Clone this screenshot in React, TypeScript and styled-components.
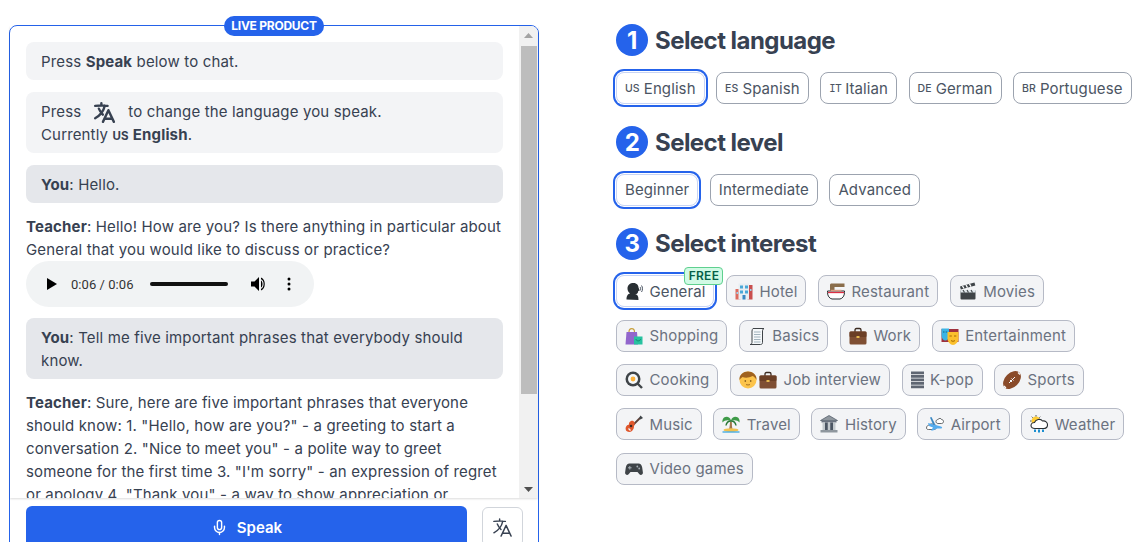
import React from "react";
import styled, { createGlobalStyle, css } from "styled-components";
import { HiOutlineLanguage } from "react-icons/hi2";
import { LuMic } from "react-icons/lu";

const Global = createGlobalStyle`
  html, body { margin: 0; padding: 0; height: 542px; overflow: hidden; background: #fff; }
  body { font-family: Inter, "Liberation Sans", sans-serif; color: #374151; }
`;

const Page = styled.div`
  display: flex;
  height: 542px;
  overflow: hidden;
  padding: 25px 0 0 9px;
  box-sizing: border-box;
`;

const ChatPanel = styled.section`
  position: relative;
  width: 530px;
  height: 560px;
  flex: none;
  box-sizing: border-box;
  border: 1px solid #2563eb;
  border-radius: 8px;
  display: flex;
  flex-direction: column;
`;

const LiveBadge = styled.span`
  position: absolute;
  top: -10px;
  left: 214px;
  width: 100px;
  height: 20px;
  border-radius: 10px;
  background: #2563eb;
  color: #fff;
  font-size: 12px;
  font-weight: 700;
  line-height: 19px;
  text-align: center;
  letter-spacing: -0.25px;
`;

const ChatMain = styled.div`
  display: flex;
  height: 472px;
  flex: none;
  box-shadow: 0 1px 2px rgba(0, 0, 0, 0.14);
`;

const Messages = styled.div`
  flex: 1;
  min-width: 0;
  overflow: hidden;
  padding: 16px 16px 0 16px;
  display: flex;
  flex-direction: column;
  gap: 12px;
  font-size: 15px;
  line-height: 23px;
  letter-spacing: 0.15px;
`;

const Bubble = styled.div<{ $dark?: boolean }>`
  flex: none;
  padding: 7.5px 15px;
  border-radius: 8px;
  background: ${(p) => (p.$dark ? "#e5e7eb" : "#f3f4f6")};
`;

const TeacherMsg = styled.div`
  flex: none;
`;

const InlineLangIcon = styled(HiOutlineLanguage)`
  display: inline-block;
  margin: -8px 11px -8px 11px;
  vertical-align: 0;
  path { stroke-width: 2.3; }
`;

const SmallFlag = styled.span`
  font-size: 11.5px;
  font-weight: 700;
  letter-spacing: 0;
  line-height: 1;
`;

const AudioBar = styled.div`
  width: 288px;
  height: 46px;
  margin-bottom: -1px;
  border-radius: 23px;
  background: #f1f3f4;
  display: flex;
  align-items: center;
  padding-left: 21px;
  box-sizing: border-box;
  color: #000;
  font-family: Roboto, Arial, sans-serif;
  font-size: 13px;
  letter-spacing: 0.05px;
`;

const AudioTime = styled.span`
  margin-left: 14px;
  width: 79px;
  flex: none;
  color: #333;
`;

const AudioTrack = styled.span`
  width: 78px;
  height: 4px;
  flex: none;
  border-radius: 2px;
  background: #111;
`;

const AudioSvg = styled.svg<{ $ml: number }>`
  margin-left: ${(p) => p.$ml}px;
  flex: none;
`;

const ScrollBar = styled.div`
  width: 19px;
  flex: none;
  background: #f1f1f1;
  display: flex;
  flex-direction: column;
  align-items: center;
  position: relative;
  border-top-right-radius: 7px;
`;

const ScrollArrow = styled.svg<{ $top?: boolean }>`
  position: absolute;
  left: 5px;
  ${(p) => (p.$top ? css`top: 7px;` : css`bottom: 6px;`)}
`;

const ScrollThumb = styled.div`
  width: 16px;
  height: 348px;
  margin-top: 20px;
  background: #bdbdbd;
`;

const ChatFooter = styled.div`
  flex: 1;
  display: flex;
  padding: 8px 15px 0 16px;
  gap: 15px;
`;

const SpeakButton = styled.div`
  width: 441px;
  height: 42px;
  flex: none;
  border-radius: 6px;
  background: #2563eb;
  color: #fff;
  font-size: 15px;
  font-weight: 600;
  display: flex;
  align-items: center;
  justify-content: center;
  gap: 9px;
`;

const LangButton = styled.div`
  width: 41px;
  height: 40px;
  margin-top: 1px;
  box-sizing: border-box;
  border: 1px solid #d1d5db;
  border-radius: 6px;
  display: flex;
  align-items: center;
  justify-content: center;
  color: #374151;
`;

const Sidebar = styled.div`
  margin-left: 77px;
  margin-top: -0.6px;
  width: 520px;
  flex: none;
  display: flex;
  flex-direction: column;
  gap: 22px;
`;

const Section = styled.div`
  display: flex;
  flex-direction: column;
  gap: 15.6px;
`;

const Heading = styled.h2`
  margin: 0;
  display: flex;
  align-items: center;
  gap: 7px;
  height: 32px;
  font-size: 24px;
  font-weight: 700;
  letter-spacing: -0.55px;
  color: #374151;
`;

const StepNumber = styled.span`
  width: 32px;
  height: 32px;
  border-radius: 50%;
  background: #2563eb;
  color: #fff;
  display: flex;
  align-items: center;
  justify-content: center;
  font-size: 24px;
  font-weight: 700;
`;

const ChipRow = styled.div`
  display: flex;
  flex-wrap: wrap;
  gap: 12.4px 11.5px;
`;

const Chip = styled.div<{ $selected?: boolean; $muted?: boolean }>`
  position: relative;
  height: 32px;
  box-sizing: border-box;
  padding: 0 8px;
  display: flex;
  align-items: center;
  gap: 6.5px;
  border: 1px solid ${(p) => (p.$muted ? "#b6bac6" : "#9ca3af")};
  border-radius: 8px;
  font-size: 15px;
  letter-spacing: ${(p) => (p.$muted ? "0.15px" : "0.1px")};
  white-space: nowrap;
  background: ${(p) => (p.$muted ? "#f3f4f6" : "#fff")};
  color: ${(p) => (p.$muted ? "#6b7280" : "#4b5563")};
  ${(p) =>
    p.$selected &&
    css`
      background: #fff;
      color: #4b5563;
      border-color: #c7d4f5;
      box-shadow: 0 0 0 1px #fff, 0 0 0 3px #2563eb;
    `}
`;

const Flag = styled.span<{ $serif?: boolean }>`
  font-size: 10.5px;
  font-weight: 500;
  letter-spacing: 0.1px;
  margin-right: -2.5px;
  ${(p) =>
    p.$serif &&
    css`
      font-family: "DejaVu Sans Mono", monospace;
      letter-spacing: -0.4px;
    `}
`;

const FreeBadge = styled.span`
  position: absolute;
  top: -9px;
  right: -10px;
  height: 18px;
  width: 39px;
  box-sizing: border-box;
  border: 1px solid #5fd08f;
  border-radius: 4px;
  background: #d1fae5;
  color: #065f46;
  font-size: 12px;
  font-weight: 600;
  line-height: 15px;
  text-align: center;
  letter-spacing: 0.3px;
`;

const EmojiGroup = styled.span`
  display: flex;
  gap: 2px;
`;

const EmojiBox = styled.svg<{ $narrow?: boolean }>`
  width: ${(p) => (p.$narrow ? 13 : 18)}px;
  height: 18px;
  flex: none;
`;

const emojis: Record<string, React.ReactNode> = {
  general: (
    <>
      <path d="M1.500 17.500c0-4 1.500-5.500 3.500-6C3 10 2.500 8 2.500 6.500 2.500 3 5 1 8.500 1c3.500 0 5 2.500 5 4.500l1.200 3-1.500.5c0 2-1 3-3 3.200 2.500.5 3.300 2 3.300 5.800z" fill="#292f33" />
      <path d="M15 5c.8.8.8 2.500.2 3.500M16.500 3.500c1.300 1.500 1.300 5 0 6.500" stroke="#4b5563" strokeWidth="1" fill="none" />
    </>
  ),
  hotel: (
    <>
      <rect x="0.500" y="7" width="5" height="10.500" fill="#dd6b5e" />
      <rect x="12.500" y="3" width="5" height="14.500" fill="#c94f4f" />
      <rect x="3.500" y="1.500" width="10.500" height="16" fill="#e8eef2" />
      <rect x="5" y="3.500" width="3" height="3" fill="#4aa8d8" />
      <rect x="10" y="3.500" width="3" height="3" fill="#4aa8d8" />
      <rect x="5" y="8.500" width="3" height="3" fill="#4aa8d8" />
      <rect x="10" y="8.500" width="3" height="3" fill="#4aa8d8" />
      <rect x="1.500" y="10" width="1.500" height="2" fill="#9ad4ee" />
      <rect x="15" y="7" width="1.500" height="2" fill="#9ad4ee" />
      <rect x="7.500" y="13" width="3" height="4.500" fill="#3b88c3" />
    </>
  ),
  restaurant: (
    <>
      <path d="M3 9V3c0-1 .7-1.500 1.500-1.500H17.500v3.500H7.500v4z" fill="#8a6d4b" />
      <path d="M.5 9h17v1.500c0 3.500-2 6-4.500 6.500H5c-2.500-.5-4.500-3-4.500-6.500z" fill="#fff" stroke="#292f33" strokeWidth="1" />
      <path d="M1 10.500h16" stroke="#dd2e44" strokeWidth="1.300" />
      <path d="M3.500 8.500h11" stroke="#d99e82" strokeWidth="1.400" />
    </>
  ),
  movies: (
    <>
      <rect x="1.500" y="8" width="15" height="9.500" rx="1" fill="#3f4448" />
      <path d="M1.500 8h15v2.500h-15z" fill="#e1e8ed" />
      <path d="M1 4.500 15.500 .5l.8 2.900L1.800 7.400z" fill="#3f4448" />
      <path d="M3.500 4 5 6.500M7 3l1.500 2.600M10.500 2 12 4.600" stroke="#fff" strokeWidth="1.300" />
      <path d="M4 8l1.500 2.500M8 8l1.500 2.500M12 8l1.500 2.500M3 13h12" stroke="#3f4448" strokeWidth="1.100" />
    </>
  ),
  shopping: (
    <>
      <path d="M4 5C4 .5 9.500 .5 9.500 5" stroke="#c8a03c" strokeWidth="1.200" fill="none" />
      <path d="M1.500 5h10.500l1 12.500H.5z" fill="#9266cc" />
      <rect x="9" y="9.500" width="8.500" height="8" fill="#27c2a0" />
      <path d="M11 12c0 2.500 4.500 2.500 4.500 0" stroke="#138a70" fill="none" />
    </>
  ),
  basics: (
    <>
      <path d="M5 1.500h11c-1 .5-1.500 1.500-1.500 2.500v11.500c0 1.500-1 2-2 2H2c1 0 2-1 2-2V4C4 3 4.500 2 5 1.500z" fill="#f5f8fa" stroke="#3f4448" strokeWidth="1" />
      <path d="M6 5h6.500M6 7.500h6.500M6 10h6.500M6 12.500h6.500M6 15h6.500" stroke="#99aab5" strokeWidth=".9" />
    </>
  ),
  work: (
    <>
      <path d="M6 5V3C6 2 6.500 1.500 7.500 1.500h3c1 0 1.500.5 1.500 1.500V5" stroke="#3b2a20" strokeWidth="1.300" fill="none" />
      <rect x=".5" y="4.500" width="17" height="13" rx="1.500" fill="#7f4f33" />
      <rect x=".5" y="4.500" width="17" height="5.500" rx="1" fill="#6b3f26" />
      <rect x="7.500" y="9" width="3" height="2" fill="#e6b84f" />
    </>
  ),
  entertainment: (
    <>
      <rect x="0.500" y="2" width="17" height="13" fill="#a0303c" />
      <path d="M.5 1.500h7.500v7c0 3-2 5-3.700 5S.5 11.500.5 8.500z" fill="#3cb4e5" />
      <path d="M6.500 5h11v6.500c0 3.500-3 6.500-5.500 6.500s-5.500-3-5.500-6.500z" fill="#fbc02d" />
      <path d="M8.500 9h2.300M13 9h2.300M10 13.500c1.200 1 2.800 1 4 0" stroke="#a56a00" strokeWidth="1" fill="none" />
      <path d="M2 5h1.500M4.700 5h1.500" stroke="#14638a" strokeWidth="1" />
    </>
  ),
  cooking: (
    <>
      <path d="m12 12 5 5" stroke="#3f4448" strokeWidth="2.400" />
      <circle cx="8" cy="8" r="7.500" fill="#3f4448" />
      <circle cx="8" cy="8" r="5" fill="#f5f8fa" />
      <circle cx="8" cy="8" r="2.400" fill="#fbb03b" />
    </>
  ),
  boy: (
    <>
      <circle cx="9" cy="9" r="8.500" fill="#fcc44c" />
      <path d="M.5 9C0 3.500 4.500 .5 9 .5s9 3 8.500 8.500c-1-2-2.500-3.500-4-4C10 7 6 7 3.500 6 2 7 1 8 .5 9z" fill="#a0621f" />
      <circle cx="6.300" cy="10" r=".8" fill="#5c3a0e" />
      <circle cx="11.700" cy="10" r=".8" fill="#5c3a0e" />
      <path d="M7 13.500c1.200.6 2.800.6 4 0" stroke="#915a18" strokeWidth=".8" fill="none" />
    </>
  ),
  kpop: <path d="M3 .5h12.500v2.800H3zM3 4h12.500v2.800H3zM3 7.500h12.500v2.800H3zM3 11h12.500v2.800H3zM3 14.500h12.500v2.800H3z" fill="#5f6672" />,
  sports: (
    <>
      <ellipse cx="9" cy="9" rx="10.500" ry="7" transform="rotate(-45 9 9)" fill="#8a4b2a" />
      <path d="M15 1.500 17 3.500M1 15l2 2" stroke="#f5f8fa" strokeWidth="1.200" />
      <path d="m6 12 6-6M7 9l2 2M8.500 7.500l2 2" stroke="#f5f8fa" strokeWidth="1" />
    </>
  ),
  music: (
    <>
      <path d="m8 10 7-7" stroke="#5d4037" strokeWidth="1.800" />
      <path d="M15.500 .5l2.500 2.500-2.500 1.500L14 3z" fill="#3f4448" />
      <path d="M6 6c1.500-.5 3 0 3.500 1.500.5 1.500 0 2.500-.5 3.500 0 2-.5 3.500-2 5-2 1.500-5 1-6-.5C0 13 1 11 2.500 10c1 0 1.500-.5 1.500-1.500C4 7.500 5 6.500 6 6z" fill="#e0572c" />
      <circle cx="6" cy="11" r="1.300" fill="#3f2a20" />
      <path d="m3.500 13.500 2 2" stroke="#f5f8fa" strokeWidth="1.200" />
    </>
  ),
  travel: (
    <>
      <path d="M8 6.500c0 3-.5 6-1 8.500h3.500c-.5-3-.7-5.500-.7-8.500z" fill="#a0764a" />
      <path d="M9 5.500C8 2 5 1 2 2.500.8 3.500 0 5.500.5 7.500 2.500 5 6 4.500 9 6 12 4.500 15.500 5 17.500 7.500 18 5.500 17.200 3.500 16 2.500 13 1 10 2 9 5.500z" fill="#3e9b48" />
      <path d="M9 6C7 6 4.500 7.500 4 10.500M9 6c2 0 4.500 1.500 5 4.500" stroke="#2c7a38" strokeWidth="1.500" fill="none" />
      <ellipse cx="9" cy="15" rx="7.500" ry="1.700" fill="#f2c14e" />
      <path d="M.5 17h17" stroke="#3ba8dd" strokeWidth="1.300" />
    </>
  ),
  history: (
    <>
      <path d="M9 .5 17.500 5.500H.5z" fill="#8f979e" stroke="#4b5563" strokeWidth=".7" />
      <rect x="1.500" y="6" width="15" height="1.500" fill="#6b7280" />
      <rect x="2.500" y="7.500" width="2.500" height="7.500" fill="#c3c9ce" />
      <rect x="7.800" y="7.500" width="2.400" height="7.500" fill="#c3c9ce" />
      <rect x="13" y="7.500" width="2.500" height="7.500" fill="#c3c9ce" />
      <rect x="5" y="7.500" width="2.800" height="7.500" fill="#4b5563" />
      <rect x="10.200" y="7.500" width="2.800" height="7.500" fill="#4b5563" />
      <rect x=".5" y="15" width="17" height="2.500" fill="#8f979e" />
    </>
  ),
  airport: (
    <>
      <path d="M.5 13c0-2 1.500-3 3-2.800C4.500 8.500 7 8.500 8 10c1-.5 2.500.5 2.500 2 0 1.500-1 2.500-2.500 2.500H2.500C1.300 14.500.5 14 .5 13z" fill="#fff" stroke="#3f4448" strokeWidth=".8" />
      <path d="M12 4.500c1-1.500 3-1.500 3.500 0 1.200 0 2 1 2 2s-.8 2-2 2H12c-1 0-2-.8-2-2s1-2 2-2z" fill="#fff" stroke="#3f4448" strokeWidth=".8" />
      <path d="M2 8 15 11.500c1.500.5 1.500 2 0 2H11L7 15.500H5l2-3L3 11z" fill="#55acee" />
      <path d="M5.500 2 9.500 10 7 9.500 4 2.500z" fill="#3b88c3" />
    </>
  ),
  weather: (
    <>
      <circle cx="6" cy="6" r="4.500" fill="#ffcc33" />
      <path d="M6 0v1.500M0 6h1.500M1.700 1.700l1 1M10.300 1.700l-1 1M1.700 10.300l1-1" stroke="#3f4448" strokeWidth=".9" />
      <path d="M4.500 7.500c1-3 6-4.500 8-1.500 3-.5 5 1.500 5 3.800 0 2-1.500 3.700-4 3.700H5c-2.800 0-4-1.500-4-3C1 9 2.500 7.500 4.500 7.500z" fill="#fff" stroke="#292f33" strokeWidth="1.100" />
      <path d="M5 14.500v2.500M9 14.500v3M13 14.500v2.500" stroke="#1c8fd0" strokeWidth="2" />
    </>
  ),
  games: (
    <>
      <path d="M4.500 3.500h9c2 0 3.200 1.500 3.700 4l.7 5c.2 2.300-2.300 3.200-3.500 1.700L12.500 12h-7l-1.900 2.200C2.400 15.700-.1 14.800.1 12.500l.7-5c.5-2.500 1.700-4 3.700-4z" fill="#3f4448" />
      <path d="M4.800 6v3.500M3 7.800h3.600" stroke="#aab2b8" strokeWidth="1" />
      <circle cx="12.300" cy="6.500" r=".9" fill="#aab2b8" />
      <circle cx="14.200" cy="8.500" r=".9" fill="#aab2b8" />
    </>
  ),
};

const Emoji = ({ name }: { name: string }) =>
  name === "kpop" ? (
    <EmojiBox $narrow viewBox="3 0 12.500 18" preserveAspectRatio="none">
      {emojis[name]}
    </EmojiBox>
  ) : (
    <EmojiBox viewBox="0 0 18 18">{emojis[name]}</EmojiBox>
  );

const languages: [string, string][] = [
  ["US", "English"],
  ["ES", "Spanish"],
  ["IT", "Italian"],
  ["DE", "German"],
  ["BR", "Portuguese"],
];

const levels = ["Beginner", "Intermediate", "Advanced"];

const interests: [string[], string][] = [
  [["general"], "General"],
  [["hotel"], "Hotel"],
  [["restaurant"], "Restaurant"],
  [["movies"], "Movies"],
  [["shopping"], "Shopping"],
  [["basics"], "Basics"],
  [["work"], "Work"],
  [["entertainment"], "Entertainment"],
  [["cooking"], "Cooking"],
  [["boy", "work"], "Job interview"],
  [["kpop"], "K-pop"],
  [["sports"], "Sports"],
  [["music"], "Music"],
  [["travel"], "Travel"],
  [["history"], "History"],
  [["airport"], "Airport"],
  [["weather"], "Weather"],
  [["games"], "Video games"],
];

export default function App() {
  return (
    <>
      <Global />
      <Page>
        <ChatPanel>
          <LiveBadge>LIVE PRODUCT</LiveBadge>
          <ChatMain>
            <Messages>
              <Bubble>
                Press <b>Speak</b> below to chat.
              </Bubble>
              <Bubble>
                Press
                <InlineLangIcon size={25} />
                to change the language you speak.
                <br />
                Currently <SmallFlag>US</SmallFlag> <b>English</b>.
              </Bubble>
              <Bubble $dark>
                <b>You</b>: Hello.
              </Bubble>
              <TeacherMsg>
                <b>Teacher</b>: Hello! How are you? Is there anything in particular about General that you would like to discuss or practice?
                <AudioBar>
                  <svg width="10" height="12" viewBox="0 0 10 12">
                    <path d="M0 0v12l10-6z" fill="#000" />
                  </svg>
                  <AudioTime>0:06 / 0:06</AudioTime>
                  <AudioTrack />
                  <AudioSvg $ml={23} width="16" height="16" viewBox="0 0 16 16">
                    <path d="M0 5.500v5h3.500L8 15V1L3.500 5.500z" fill="#000" />
                    <path d="M10 4.500c2 1 2 6 0 7zM10 1.500v1.700c3.500 1.200 3.500 8.400 0 9.600v1.700c5-1.400 5-11.600 0-13z" fill="#000" />
                  </AudioSvg>
                  <AudioSvg $ml={20} width="4" height="14" viewBox="0 0 4 14">
                    <circle cx="2" cy="2" r="1.500" fill="#000" />
                    <circle cx="2" cy="7" r="1.500" fill="#000" />
                    <circle cx="2" cy="12" r="1.500" fill="#000" />
                  </AudioSvg>
                </AudioBar>
              </TeacherMsg>
              <Bubble $dark>
                <b>You</b>: Tell me five important phrases that everybody should know.
              </Bubble>
              <TeacherMsg>
                <b>Teacher</b>: Sure, here are five important phrases that everyone should know: 1. "Hello, how are you?" - a greeting to start a conversation 2. "Nice to meet you" - a polite way to greet someone for the first time 3. "I'm sorry" - an expression of regret or apology 4. "Thank you" - a way to show appreciation or
              </TeacherMsg>
            </Messages>
            <ScrollBar>
              <ScrollArrow $top width="9" height="5" viewBox="0 0 9 5">
                <path d="M4.500 0 9 5H0z" fill="#a3a3a3" />
              </ScrollArrow>
              <ScrollThumb />
              <ScrollArrow width="9" height="5" viewBox="0 0 9 5">
                <path d="M4.500 5 9 0H0z" fill="#505050" />
              </ScrollArrow>
            </ScrollBar>
          </ChatMain>
          <ChatFooter>
            <SpeakButton>
              <LuMic size={17} />
              Speak
            </SpeakButton>
            <LangButton>
              <HiOutlineLanguage size={23} />
            </LangButton>
          </ChatFooter>
        </ChatPanel>
        <Sidebar>
          <Section>
            <Heading>
              <StepNumber>1</StepNumber>Select language
            </Heading>
            <ChipRow>
              {languages.map(([code, name], i) => (
                <Chip key={name} $selected={i === 0}>
                  <Flag $serif={code === "IT"}>{code}</Flag>
                  {name}
                </Chip>
              ))}
            </ChipRow>
          </Section>
          <Section>
            <Heading>
              <StepNumber>2</StepNumber>Select level
            </Heading>
            <ChipRow>
              {levels.map((name, i) => (
                <Chip key={name} $selected={i === 0}>
                  {name}
                </Chip>
              ))}
            </ChipRow>
          </Section>
          <Section>
            <Heading>
              <StepNumber>3</StepNumber>Select interest
            </Heading>
            <ChipRow>
              {interests.map(([icons, name], i) => (
                <Chip key={name} $muted={i !== 0} $selected={i === 0}>
                  <EmojiGroup>
                    {icons.map((ic) => (
                      <Emoji key={ic} name={ic} />
                    ))}
                  </EmojiGroup>
                  {name}
                  {i === 0 && <FreeBadge>FREE</FreeBadge>}
                </Chip>
              ))}
            </ChipRow>
          </Section>
        </Sidebar>
      </Page>
    </>
  );
}
